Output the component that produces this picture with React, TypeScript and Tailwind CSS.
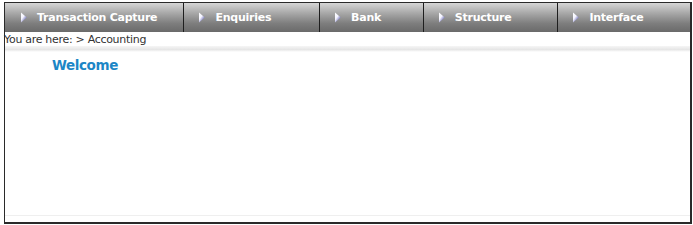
import React from "react";

const tabs = [
  { label: "Transaction Capture", w: 179 },
  { label: "Enquiries", w: 136 },
  { label: "Bank", w: 104 },
  { label: "Structure", w: 135 },
  { label: "Interface", w: 133 },
];

function Arrow() {
  return (
    <svg width="7" height="11" viewBox="0 0 7 11" className="shrink-0">
      <defs>
        <linearGradient id="ag" x1="0" y1="0" x2="0.8" y2="1">
          <stop offset="0" stopColor="#ffffff" />
          <stop offset="0.45" stopColor="#f4f4ff" />
          <stop offset="1" stopColor="#3c3c9a" />
        </linearGradient>
      </defs>
      <path d="M1 0.5 L6.8 5.5 L1 10.5 Z" fill="url(#ag)" />
    </svg>
  );
}

export default function App() {
  return (
    <div className="w-[693px] h-[225px] bg-white pt-[2px] pl-[4px] overflow-hidden" style={{ fontFamily: '"DejaVu Sans", Verdana, sans-serif' }}>
      <div className="w-[688px] h-[222px] border border-[#2a2a2a] border-r-2 border-b-2 flex flex-col">
        <div className="flex h-[29px] bg-[linear-gradient(to_bottom,#d6d6d6_0%,#a8a8a8_35%,#7e7e7e_70%,#6a6a6a_100%)]">
          {tabs.map((t, i) => (
            <div
              key={t.label}
              className={`flex items-center h-full ${i > 0 ? "border-l border-[#1e1e1e]" : ""} ${i === 0 ? "pl-[15px]" : "pl-[14px]"}`}
              style={{ width: t.w }}
            >
              <Arrow />
              <span className="ml-[10px] text-white font-bold text-[11px] leading-none tracking-[-0.25px]">{t.label}</span>
            </div>
          ))}
        </div>
        <div className="h-[14px] flex items-center text-[11px] leading-none text-[#333] -ml-[1px] tracking-[-0.3px]">
          You are here: &gt; Accounting
        </div>
        <div className="h-[6px] bg-[linear-gradient(to_bottom,#f6f6f6,#e6e6e6_60%,#ffffff)]" />
        <div className="pl-[47px] pt-[7px] text-[13.5px] font-bold text-[#1c86c6] leading-none tracking-[-0.4px]">Welcome</div>
        <div className="flex-1" />
        <div className="h-[1px] bg-[#efefef] mb-[6px]" />
      </div>
    </div>
  );
}
